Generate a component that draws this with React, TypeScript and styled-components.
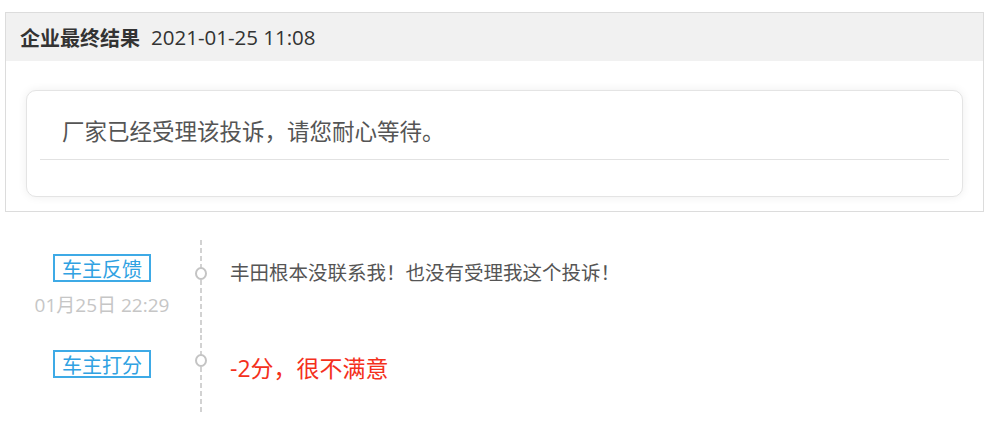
import React from 'react'
import styled, { createGlobalStyle } from 'styled-components'

const GlobalStyle = createGlobalStyle`
  html, body {
    margin: 0;
    padding: 0;
    background: #fff;
  }

  body {
    font-family: 'Open Sans', 'Noto Sans CJK SC', sans-serif;
    color: #333;
  }
`

interface IRecord {
  key: string
  tag: string
  time?: string
  text: string
  score?: boolean
}

const records: IRecord[] = [
  {
    key: 'feedback',
    tag: '车主反馈',
    time: '01月25日 22:29',
    text: '丰田根本没联系我！也没有受理我这个投诉！',
  },
  {
    key: 'score',
    tag: '车主打分',
    text: '-2分，很不满意',
    score: true,
  },
]

export default function App() {
  return (
    <>
      <GlobalStyle />
      <Page>
        <ResultBox>
          <ResultHeader>
            <strong>企业最终结果</strong>
            <span>2021-01-25 11:08</span>
          </ResultHeader>
          <ResultBody>
            <Card>
              <CardText>厂家已经受理该投诉，请您耐心等待。</CardText>
              <Divider />
              <CardFoot />
            </Card>
          </ResultBody>
        </ResultBox>

        <Timeline>
          {records.map(item => (
            <Row key={item.key} $score={item.score}>
              <Side $score={item.score}>
                <Tag>{item.tag}</Tag>
                {item.time && <Time>{item.time}</Time>}
              </Side>
              <Axis>
                <Dot $score={item.score} />
              </Axis>
              <Content $score={item.score}>{item.text}</Content>
            </Row>
          ))}
        </Timeline>
      </Page>
    </>
  )
}

const Page = styled.div`
  padding: 12px 0 0 5px;
  width: 979px;
`

const ResultBox = styled.div`
  border: 1px solid #dcdcdc;
  background: #fff;
`

const ResultHeader = styled.div`
  height: 48px;
  display: flex;
  align-items: center;
  gap: 11px;
  padding-left: 14px;
  background: #f1f1f1;
  font-size: 20px;
  color: #333;

  strong {
    font-weight: 700;
  }

  span {
    font-size: 20.5px;
  }
`

const ResultBody = styled.div`
  padding: 29px 20px 14px;
`

const Card = styled.div`
  border: 1px solid #e4e4e4;
  border-radius: 10px;
  padding: 0 13px;
  background: #fff;
  box-shadow: 0 0 10px rgba(0, 0, 0, 0.07);
`

const CardText = styled.div`
  padding: 27px 0 13px 22px;
  font-size: 22.5px;
  line-height: 28px;
  color: #555;
`

const Divider = styled.div`
  height: 1px;
  background: #e2e2e2;
`

const CardFoot = styled.div`
  height: 36px;
`

const Timeline = styled.div`
  margin-top: 28px;
`

const Row = styled.div<{ $score?: boolean }>`
  display: grid;
  grid-template-columns: 190px 12px 1fr;
  height: ${({ $score }) => ($score ? '77px' : '95px')};
`

const Side = styled.div<{ $score?: boolean }>`
  display: flex;
  flex-direction: column;
  align-items: center;
  padding: ${({ $score }) => ($score ? '15px' : '14px')} 0 0 4px;
`

const Tag = styled.div`
  box-sizing: border-box;
  width: 98px;
  height: 28px;
  display: flex;
  align-items: center;
  justify-content: center;
  border: 2px solid #3eaae6;
  font-size: 20px;
  color: #30a2e2;
`

const Time = styled.div`
  margin-top: 12px;
  font-size: 19px;
  line-height: 22px;
  color: #c6c6c6;
`

const Axis = styled.div`
  display: flex;
  justify-content: center;
  background: repeating-linear-gradient(to bottom, #d2d2d2 0 5px, transparent 5px 8px) center / 2px 100% no-repeat;
`

const Dot = styled.div<{ $score?: boolean }>`
  box-sizing: border-box;
  width: 13px;
  height: 13px;
  margin-top: ${({ $score }) => ($score ? '19px' : '27px')};
  border: 2.5px solid #c4c4c4;
  border-radius: 50%;
  background: #fff;
`

const Content = styled.div<{ $score?: boolean }>`
  padding: ${({ $score }) => ($score ? '18px' : '20px')} 0 0 23px;
  font-size: ${({ $score }) => ($score ? '23px' : '19.5px')};
  line-height: ${({ $score }) => ($score ? '30px' : '26px')};
  color: ${({ $score }) => ($score ? '#f4301c' : '#555')};
`
